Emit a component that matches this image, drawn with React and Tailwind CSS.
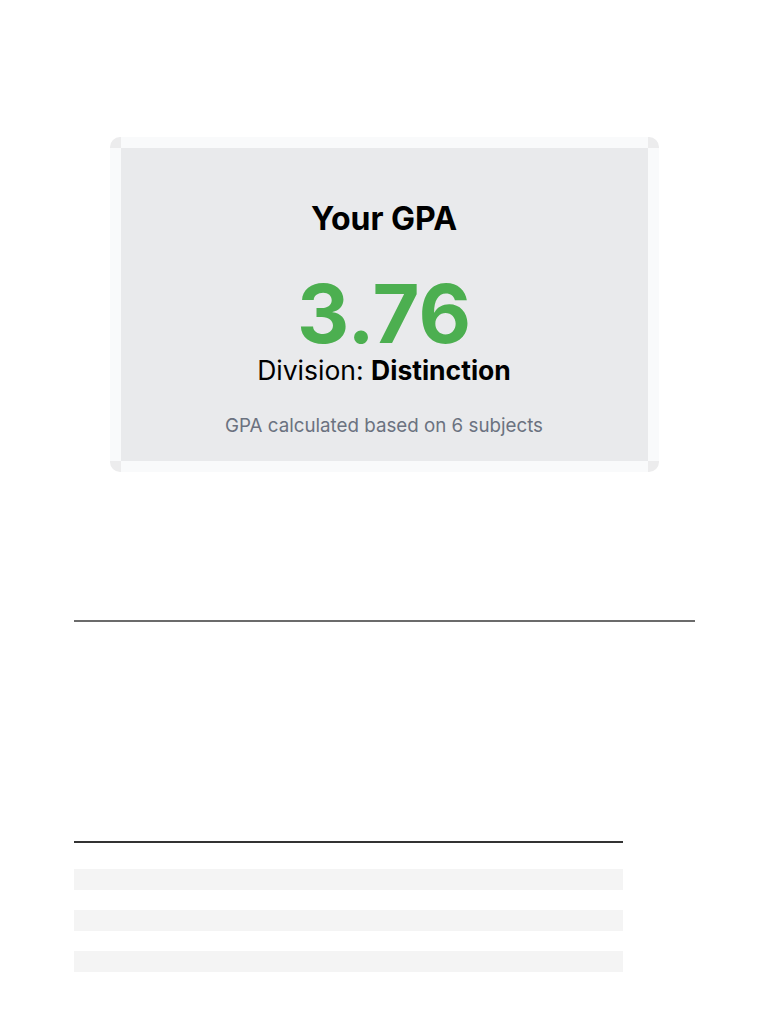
export default function App() {
  return (
    <div
      className="min-h-[1024px] w-full bg-white"
      style={{ fontFamily: "Inter, Roboto, sans-serif" }}
    >
      <div className="mx-auto w-[621px] pt-[137px]">
        {/* result card */}
        <div className="mx-auto w-[549px] rounded-[10px] bg-[#ececed] p-[11px]">
          <div className="flex h-[313px] flex-col items-center bg-[#e9eaec] pt-[55px] shadow-[0_-11px_0_#f9fafb,0_11px_0_#f9fafb,-11px_0_0_#f9fafb,11px_0_0_#f9fafb]">
            <h2 className="text-[32px] font-bold leading-[32px] text-black">Your GPA</h2>
            <div className="mt-[50px] text-[81px] font-bold leading-[58px] text-[#4caf50]">3.76</div>
            <p className="mt-[14px] text-[26.5px] leading-[26px] text-black">
              Division: <span className="font-bold">Distinction</span>
            </p>
            <p className="mt-[34px] text-[18.75px] leading-[18px] text-[#6b7280]">
              GPA calculated based on 6 subjects
            </p>
          </div>
        </div>

        {/* divider */}
        <div className="mt-[148px] h-[2px] w-full bg-[#6b6b6b]" />

        {/* subject list placeholder */}
        <div className="mt-[219px] w-[549px]">
          <div className="h-[2px] w-full bg-[#333333]" />
          <div className="mt-[26px] flex flex-col gap-[20px]">
            <div className="h-[21px] w-full bg-[#f4f4f4]" />
            <div className="h-[21px] w-full bg-[#f4f4f4]" />
            <div className="h-[21px] w-full bg-[#f4f4f4]" />
          </div>
        </div>
      </div>
    </div>
  );
}
